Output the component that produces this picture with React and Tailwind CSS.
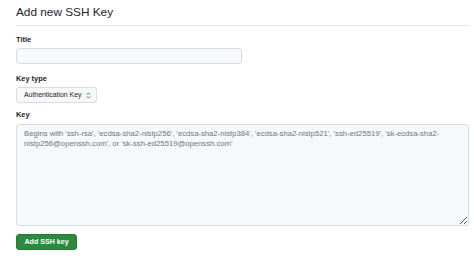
import React from 'react';

const font = { fontFamily: '"Liberation Sans", Helvetica, Arial, sans-serif' };

function SelectArrows() {
  return (
    <svg width="5" height="7" viewBox="0 0 5 7" className="shrink-0">
      <path d="M0.8 2.6 L2.5 0.9 L4.2 2.6" fill="none" stroke="#57606a" strokeWidth="0.9" />
      <path d="M0.8 4.4 L2.5 6.1 L4.2 4.4" fill="none" stroke="#57606a" strokeWidth="0.9" />
    </svg>
  );
}

export default function App() {
  return (
    <div className="w-[474px] h-[262px] bg-white text-[#1f2328] overflow-hidden" style={font}>
      <div className="pl-[16px] w-[470px]">
        <h2 className="pt-[5px] pb-[6px] text-[11.8px] leading-[14px] font-normal border-b border-[#e3e6ea]">
          Add new SSH Key
        </h2>

        <label className="block mt-[9px] text-[7.4px] leading-[10px] font-bold">Title</label>
        <input
          className="block mt-[3px] w-[226px] h-[16px] bg-[#f6f8fa] border border-[#d8dde3] rounded-[3px] outline-none"
          aria-label="Title"
        />

        <label className="block mt-[10px] text-[7.4px] leading-[10px] font-bold">Key type</label>
        <div className="mt-[3px] w-[81px] h-[16px] flex items-center justify-between pl-[7px] pr-[5px] bg-[#f6f8fa] border border-[#d8dde3] rounded-[3px] text-[6.9px]">
          <span>Authentication Key</span>
          <SelectArrows />
        </div>

        <label className="block mt-[7px] text-[7.4px] leading-[10px] font-bold">Key</label>
        <textarea
          className="block mt-[4px] w-[453px] h-[102px] bg-[#f6f8fa] border border-[#d8dde3] rounded-[3px] px-[7px] pt-[4px] text-[7.7px] leading-[10px] outline-none placeholder:text-[#6e7781]"
          style={font}
          placeholder="Begins with 'ssh-rsa', 'ecdsa-sha2-nistp256', 'ecdsa-sha2-nistp384', 'ecdsa-sha2-nistp521', 'ssh-ed25519', 'sk-ecdsa-sha2-nistp256@openssh.com', or 'sk-ssh-ed25519@openssh.com'"
        />

        <button className="mt-[8px] w-[61px] h-[16px] flex items-center justify-center bg-[#2c8a3f] border border-[#28783a] rounded-[3px] text-white text-[7.1px] font-bold">
          Add SSH key
        </button>
      </div>
    </div>
  );
}
